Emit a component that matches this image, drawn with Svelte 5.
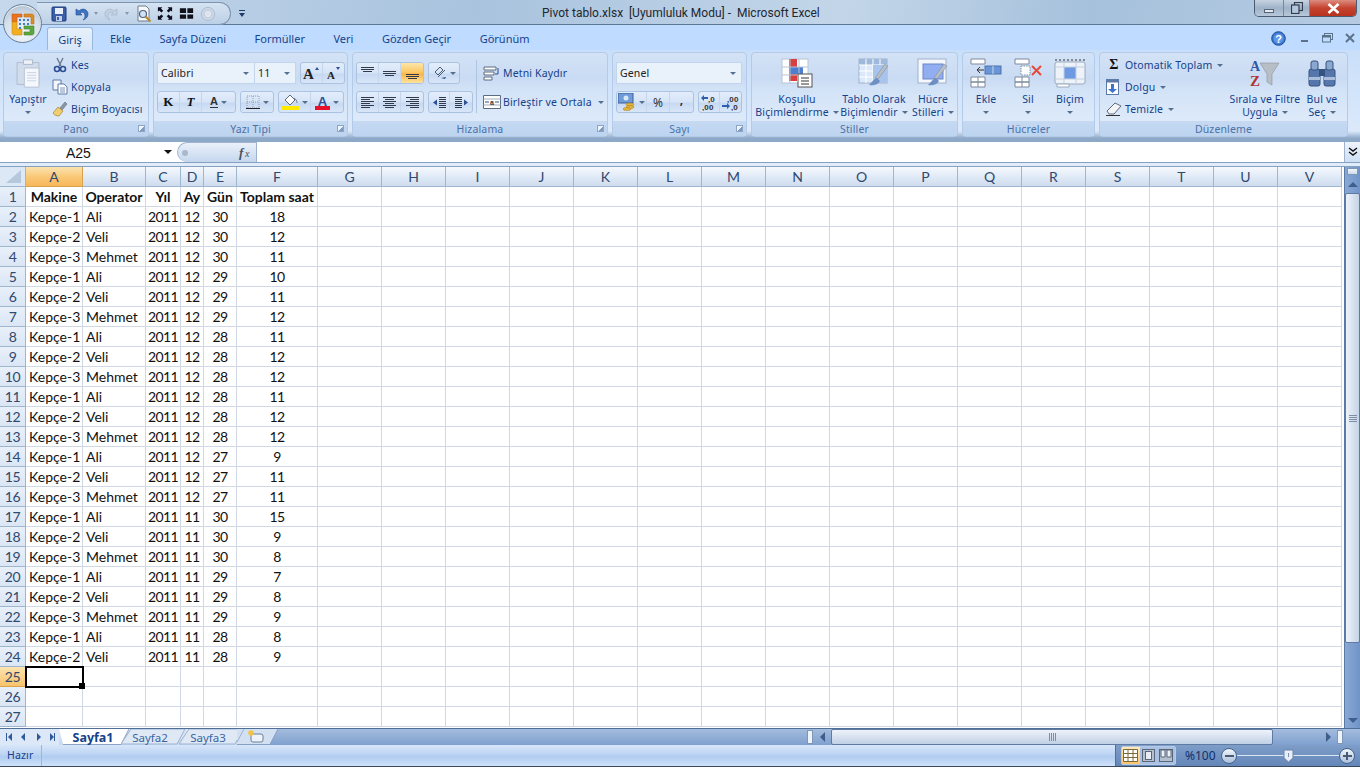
<script>
  const tabs = ['Giriş', 'Ekle', 'Sayfa Düzeni', 'Formüller', 'Veri', 'Gözden Geçir', 'Görünüm'];
  const colWidths = [57, 63, 35, 23, 33, 81, 64, 64, 64, 64, 64, 64, 64, 64, 64, 64, 64, 64, 64, 64, 64, 64];
  const colNames = 'ABCDEFGHIJKLMNOPQRSTUV'.split('');
  const template = '26px ' + colWidths.map((w) => w + 'px').join(' ');
  const head = ['Makine', 'Operator', 'Yıl', 'Ay', 'Gün', 'Toplam saat'];
  const rows = [
    ['Kepçe-1', 'Ali', 2011, 12, 30, 18],
    ['Kepçe-2', 'Veli', 2011, 12, 30, 12],
    ['Kepçe-3', 'Mehmet', 2011, 12, 30, 11],
    ['Kepçe-1', 'Ali', 2011, 12, 29, 10],
    ['Kepçe-2', 'Veli', 2011, 12, 29, 11],
    ['Kepçe-3', 'Mehmet', 2011, 12, 29, 12],
    ['Kepçe-1', 'Ali', 2011, 12, 28, 11],
    ['Kepçe-2', 'Veli', 2011, 12, 28, 12],
    ['Kepçe-3', 'Mehmet', 2011, 12, 28, 12],
    ['Kepçe-1', 'Ali', 2011, 12, 28, 11],
    ['Kepçe-2', 'Veli', 2011, 12, 28, 12],
    ['Kepçe-3', 'Mehmet', 2011, 12, 28, 12],
    ['Kepçe-1', 'Ali', 2011, 12, 27, 9],
    ['Kepçe-2', 'Veli', 2011, 12, 27, 11],
    ['Kepçe-3', 'Mehmet', 2011, 12, 27, 11],
    ['Kepçe-1', 'Ali', 2011, 11, 30, 15],
    ['Kepçe-2', 'Veli', 2011, 11, 30, 9],
    ['Kepçe-3', 'Mehmet', 2011, 11, 30, 8],
    ['Kepçe-1', 'Ali', 2011, 11, 29, 7],
    ['Kepçe-2', 'Veli', 2011, 11, 29, 8],
    ['Kepçe-3', 'Mehmet', 2011, 11, 29, 9],
    ['Kepçe-1', 'Ali', 2011, 11, 28, 8],
    ['Kepçe-2', 'Veli', 2011, 11, 28, 9]
  ];
  const blankCols = colWidths.length - 6;
</script>

<div class="app">
  <!-- title bar -->
  <div class="titlebar">
    <div class="qat">
      <svg width="16" height="16" viewBox="0 0 16 16" class="q1"><rect x="1" y="1" width="14" height="14" rx="1" fill="#3a5fa8" stroke="#1d3a78"/><rect x="4" y="2" width="8" height="6" fill="#e8eef8"/><rect x="5" y="10" width="6" height="5" fill="#c4cfe4"/><rect x="6" y="11" width="2" height="3" fill="#3a5fa8"/></svg>
      <svg width="16" height="16" viewBox="0 0 16 16" class="q2"><path d="M3 3v6h6L7 7c3-2 5 0 5 3 0 2-1 3-2 4 3-1 5-3 5-6 0-4-5-7-9-3z" fill="#3f74c4" stroke="#1f4a92" stroke-width=".6"/></svg>
      <span class="mini-caret q3"></span>
      <svg width="16" height="16" viewBox="0 0 16 16" class="q4"><path d="M13 3v6H7l2-2C6 5 4 7 4 10c0 2 1 3 2 4-3-1-5-3-5-6 0-4 5-7 9-3z" fill="#c2d0e2" stroke="#9fb2c8" stroke-width=".6"/></svg>
      <span class="mini-caret q5"></span>
      <svg width="18" height="18" viewBox="0 0 18 18" class="q6"><path d="M3 1h8l3 3v12H3z" fill="#f8f8f8" stroke="#6d7d92"/><circle cx="8" cy="9" r="3.5" fill="#cfe2f7" stroke="#4d6480" stroke-width="1.2"/><path d="M10.500 11.500l5 5" stroke="#b98b2c" stroke-width="2.200"/></svg>
      <svg width="16" height="15" viewBox="0 0 18 16" class="q7"><path d="M1 1h5L4.500 2.500 7 5 5 7 2.500 4.500 1 6zM17 1v5l-1.500-1.500L13 7l-2-2 2.500-2.500L12 1zM1 15v-5l1.500 1.500L5 9l2 2-2.500 2.500L6 15zM17 15h-5l1.500-1.500L11 11l2-2 2.500 2.500L17 10z" fill="#0c0c20"/></svg>
      <svg width="15" height="13" viewBox="0 0 17 14" class="q8"><path d="M1 1h7v5.500H1zM9.500 1H16v5.500H9.500zM1 8h7v5H1zM9.500 8H16v5H9.500z" fill="#101018"/></svg>
      <svg width="16" height="16" viewBox="0 0 18 18" class="q9"><circle cx="9" cy="9" r="7.500" fill="#ccd8e6" stroke="#aab9cb"/><circle cx="9" cy="9" r="4.500" fill="#dde5ef" stroke="#bcc8d6"/></svg>
    </div>
    <svg class="custom" width="8" height="9" viewBox="0 0 8 9"><path d="M1 1h6v1H1zM1 4h6L4 8z" fill="#1f3a68"/></svg>
    <div class="title">Pivot tablo.xlsx&nbsp; [Uyumluluk Modu] -&nbsp; Microsoft Excel</div>
    <div class="winbtns">
      <div class="wb min"><span></span></div>
      <div class="wb max"><svg width="12" height="12" viewBox="0 0 12 12"><rect x="3.500" y=".5" width="8" height="8" fill="none" stroke="#333c4c" stroke-width="1.200"/><rect x=".5" y="3" width="7.500" height="8.500" fill="#b4c6da" stroke="#333c4c" stroke-width="1.200"/></svg></div>
      <div class="wb close"><svg width="13" height="11" viewBox="0 0 13 11"><path d="M1.500 1l10 9M11.500 1l-10 9" stroke="#fff" stroke-width="2.600"/></svg></div>
    </div>
  </div>

  <!-- office orb overlays the title and tab rows -->
  <div class="orb">
    <svg width="26" height="26" viewBox="0 0 26 26">
      <path d="M2 3h10v3H7v5H2z" fill="#e8741e" stroke="#c9591a" stroke-width=".6"/>
      <path d="M2 11h5v7h5v6H4c-1 0-2-1-2-2z" fill="#f0b020" stroke="#cf8c16" stroke-width=".6"/>
      <path d="M14 15h10v7c0 1-1 2-2 2h-8v-3h6v-3h-6z" fill="#5da63f" stroke="#3f8a2a" stroke-width=".6"/>
      <path d="M14 3h8c1 0 2 1 2 2v8h-3V6h-7z" fill="#d98a2a" stroke="#c27420" stroke-width=".6"/>
      <path d="M9 8h2v2H9zM13 8h2v2h-2zM17 8h2v2h-2zM9 12h2v2H9zM13 12h2v2h-2zM17 12h2v2h-2zM9 16h2v2H9z" fill="#3f7fc4"/>
    </svg>
  </div>

  <!-- tab row -->
  <div class="tabrow">
    {#each tabs as t, i}
      <div class="tab" class:active={i === 0}>{t}</div>
    {/each}
    <div class="tabrow-right">
      <svg width="15" height="15" viewBox="0 0 15 15"><circle cx="7.500" cy="7.500" r="6.800" fill="#3b74cc" stroke="#1e4fa2"/><circle cx="7.500" cy="7.500" r="5" fill="#5a95e6"/><text x="7.500" y="11.500" text-anchor="middle" font-size="11" font-weight="700" font-family="Liberation Sans" fill="#fff">?</text></svg>
      <svg class="rc1" width="10" height="10" viewBox="0 0 10 10"><rect x="1" y="7" width="7" height="2" fill="#5b7288"/></svg>
      <svg class="rc2" width="11" height="10" viewBox="0 0 11 10"><rect x="2.500" y=".5" width="8" height="6" fill="none" stroke="#5b7288"/><rect x=".5" y="2.500" width="8" height="6.500" fill="#bfdbff" stroke="#5b7288"/><rect x=".5" y="2.500" width="8" height="2" fill="#5b7288"/></svg>
      <svg class="rc3" width="10" height="10" viewBox="0 0 10 10"><path d="M1 1l8 8M9 1l-8 8" stroke="#5b7288" stroke-width="2"/></svg>
    </div>
  </div>

  <!-- ribbon -->
  <div class="ribbon">
    <section class="group" style="width:146px">
      <div class="body pano">
        <div class="lg paste">
          <svg width="28" height="31" viewBox="0 0 28 34"><path d="M2 5h24v24H2z" fill="#d3dcea" stroke="#aebccf"/><path d="M9 2h10v5H9z" fill="#eef2f8" stroke="#a8b6c9"/><path d="M10 11h16v21H10z" fill="#f4f7fb" stroke="#b5c1d2"/><path d="M13 16h10M13 19h10M13 22h10M13 25h10" stroke="#c8d2df"/></svg>
          <span>Yapıştır</span>
          <i class="caret"></i>
        </div>
        <div class="stack">
          <div class="row"><svg width="16" height="16" viewBox="0 0 16 16"><path d="M5 1l4 8M11 1L7 9" stroke="#6d7a8c" stroke-width="1.400"/><circle cx="5" cy="12" r="2.500" fill="none" stroke="#2d4f94" stroke-width="1.600"/><circle cx="11" cy="12" r="2.500" fill="none" stroke="#2d4f94" stroke-width="1.600"/></svg>Kes</div>
          <div class="row"><svg width="16" height="16" viewBox="0 0 16 16"><path d="M1 1h8v10H1z" fill="#f3f6fb" stroke="#5c7aa6"/><path d="M6 5h6l3 3v7H6z" fill="#fff" stroke="#5c7aa6"/><path d="M8 9h5M8 11h5M8 13h5" stroke="#7a93b8"/></svg>Kopyala</div>
          <div class="row"><svg width="16" height="16" viewBox="0 0 16 16"><path d="M8 7l5-6 2 2-5 6z" fill="#8a97a8" stroke="#5c6879" stroke-width=".6"/><path d="M1 12l5-6 5 4-4 5c-2 0-5-1-6-3z" fill="#f0cf72" stroke="#a8812c" stroke-width=".7"/></svg>Biçim Boyacısı</div>
        </div>
      </div>
      <div class="label">Pano<i class="launch"></i></div>
    </section>

    <section class="group" style="width:195px">
      <div class="body lines">
        <div class="line">
          <div class="select" style="width:98px">Calibri<i class="caret"></i></div>
          <div class="select" style="width:42px;margin-left:-1px">11<i class="caret"></i></div>
          <div class="btnset" style="margin-left:4px">
            <div class="btn" style="width:22px"><svg width="18" height="15" viewBox="0 0 18 15"><text x="0" y="13" font-family="Liberation Serif" font-weight="700" font-size="15" fill="#222">A</text><path d="M12 4l2-3 2 3z" fill="#2d4f94"/></svg></div>
            <div class="btn" style="width:21px"><svg width="16" height="15" viewBox="0 0 16 15"><text x="1" y="13" font-family="Liberation Serif" font-weight="700" font-size="11" fill="#222">A</text><path d="M10 1l2 3 2-3z" fill="#2d4f94"/></svg></div>
          </div>
        </div>
        <div class="line">
          <div class="btnset">
            <div class="btn" style="width:22px"><b class="k">K</b></div>
            <div class="btn" style="width:22px"><b class="t">T</b></div>
            <div class="btn" style="width:33px"><span class="u">A</span><i class="caret"></i></div>
          </div>
          <div class="btnset" style="margin-left:4px">
            <div class="btn" style="width:32px"><svg width="14" height="14" viewBox="0 0 14 14"><path d="M1 1h12v12H1zM7 1v12M1 7h12" fill="none" stroke="#8f9cae" stroke-dasharray="1 1"/><path d="M0 13.500h14" stroke="#222"/></svg><i class="caret"></i></div>
          </div>
          <div class="btnset" style="margin-left:4px">
            <div class="btn" style="width:32px"><svg width="17" height="16" viewBox="0 0 17 16"><path d="M3 6l5-5 5 5-5 5z" fill="#fff" stroke="#5b6a80"/><path d="M12 4c2 1 3 3 3 5" stroke="#6a7a90" fill="none"/><rect x="0" y="12" width="17" height="4" fill="#ffea00"/></svg><i class="caret"></i></div>
            <div class="btn" style="width:32px"><svg width="15" height="16" viewBox="0 0 15 16"><text x="7.500" y="11.500" text-anchor="middle" font-family="Liberation Sans" font-weight="700" font-size="13" fill="#2d4f94">A</text><rect x="0" y="12" width="15" height="4" fill="#e8102a"/></svg><i class="caret"></i></div>
          </div>
        </div>
      </div>
      <div class="label">Yazı Tipi<i class="launch"></i></div>
    </section>

    <section class="group" style="width:256px">
      <div class="body align">
        <div class="lines">
          <div class="line">
            <div class="btnset">
              <div class="btn" style="width:22px"><svg width="15" height="14" viewBox="0 0 15 14"><path d="M1 1.500h13M1 3.500h13M3 5.500h9" stroke="#303a4a"/></svg></div>
              <div class="btn" style="width:22px"><svg width="15" height="14" viewBox="0 0 15 14"><path d="M1 5.500h13M1 7.500h13M3 9.500h9" stroke="#303a4a"/></svg></div>
              <div class="btn on" style="width:22px"><svg width="15" height="14" viewBox="0 0 15 14"><path d="M1 8.500h13M1 10.500h13M3 12.500h9" stroke="#303a4a"/></svg></div>
            </div>
            <div class="btnset" style="margin-left:4px">
              <div class="btn" style="width:30px"><svg width="14" height="14" viewBox="0 0 14 14"><path d="M2 6l5-5 3 3-5 5zM5 11l7-7" fill="none" stroke="#4b5b72"/><path d="M8 12l5-1-1 2z" fill="#2d4f94"/></svg><i class="caret"></i></div>
            </div>
          </div>
          <div class="line">
            <div class="btnset">
              <div class="btn" style="width:22px"><svg width="15" height="13" viewBox="0 0 15 13"><path d="M1 1.500h13M1 3.500h9M1 5.500h13M1 7.500h9M1 9.500h13M1 11.500h9" stroke="#303a4a"/></svg></div>
              <div class="btn" style="width:22px"><svg width="15" height="13" viewBox="0 0 15 13"><path d="M1 1.500h13M3 3.500h9M1 5.500h13M3 7.500h9M1 9.500h13M3 11.500h9" stroke="#303a4a"/></svg></div>
              <div class="btn" style="width:22px"><svg width="15" height="13" viewBox="0 0 15 13"><path d="M1 1.500h13M5 3.500h9M1 5.500h13M5 7.500h9M1 9.500h13M5 11.500h9" stroke="#303a4a"/></svg></div>
            </div>
            <div class="btnset" style="margin-left:4px">
              <div class="btn" style="width:21px"><svg width="15" height="13" viewBox="0 0 15 13"><path d="M7 1.500h7M7 3.500h7M7 5.500h7M7 7.500h7M7 9.500h7M7 11.500h7" stroke="#303a4a"/><path d="M1 6.500l4-3v6z" fill="#2d4f94"/></svg></div>
              <div class="btn" style="width:22px"><svg width="15" height="13" viewBox="0 0 15 13"><path d="M1 1.500h7M1 3.500h7M1 5.500h7M1 7.500h7M1 9.500h7M1 11.500h7" stroke="#303a4a"/><path d="M14 6.500l-4-3v6z" fill="#2d4f94"/></svg></div>
            </div>
          </div>
        </div>
        <div class="vsep"></div>
        <div class="lines wraps">
          <div class="line text"><svg width="18" height="16" viewBox="0 0 18 16"><path d="M1 2h12v3H1zM1 7h10v3H1zM1 12h8v3H1z" fill="#fff" stroke="#5d6b7e"/><path d="M15 3v6h-3" fill="none" stroke="#2d4f94"/></svg>Metni Kaydır</div>
          <div class="line text"><svg width="18" height="16" viewBox="0 0 18 16"><path d="M.5 1.500h17v13H.5z" fill="#fff" stroke="#5d6b7e"/><path d="M.5 5h17M.5 11h17" stroke="#a0acbc"/><path d="M2 8h4M12 8h4" stroke="#2d4f94"/><text x="9" y="10.500" text-anchor="middle" font-size="7" font-family="Liberation Sans" font-weight="700" fill="#333">a</text></svg>Birleştir ve Ortala<i class="caret"></i></div>
        </div>
      </div>
      <div class="label">Hizalama<i class="launch"></i></div>
    </section>

    <section class="group" style="width:135px">
      <div class="body lines">
        <div class="line">
          <div class="select" style="width:126px">Genel<i class="caret"></i></div>
        </div>
        <div class="line">
          <div class="btnset">
            <div class="btn" style="width:30px"><svg width="18" height="18" viewBox="0 0 18 18"><rect x="0" y="0" width="15" height="10" fill="#6f9bd8" stroke="#3a5f9c"/><circle cx="8" cy="5" r="2.500" fill="#d8e6f8"/><ellipse cx="12" cy="11.500" rx="4" ry="1.500" fill="#e6b63c" stroke="#a47c1e" stroke-width=".5"/><ellipse cx="12" cy="14" rx="4" ry="1.500" fill="#e6b63c" stroke="#a47c1e" stroke-width=".5"/><ellipse cx="9" cy="16" rx="4" ry="1.500" fill="#e6b63c" stroke="#a47c1e" stroke-width=".5"/></svg><i class="caret"></i></div>
            <div class="btn pct" style="width:23px">%</div>
            <div class="btn pct comma" style="width:23px">,</div>
          </div>
          <div class="btnset" style="margin-left:4px">
            <div class="btn nf" style="width:21px"><svg width="19" height="17" viewBox="0 0 19 17"><text x="8" y="7.500" font-size="8" font-weight="700" font-family="Liberation Sans" fill="#333">,0</text><text x="2" y="15.500" font-size="8" font-weight="700" font-family="Liberation Sans" fill="#333">,00</text><path d="M1 4l3-3v2h4v2H4v2z" fill="#2d5fae"/></svg></div>
            <div class="btn nf" style="width:21px"><svg width="19" height="17" viewBox="0 0 19 17"><text x="6" y="7.500" font-size="8" font-weight="700" font-family="Liberation Sans" fill="#333">,00</text><text x="10" y="15.500" font-size="8" font-weight="700" font-family="Liberation Sans" fill="#333">,0</text><path d="M9 12l-3-3v2H1v2h5v2z" fill="#2d5fae"/></svg></div>
          </div>
        </div>
      </div>
      <div class="label">Sayı<i class="launch"></i></div>
    </section>

    <section class="group" style="width:207px">
      <div class="body big">
        <div class="lg" style="width:82px">
          <svg width="32" height="30" viewBox="0 0 32 30"><rect x="1" y="1" width="26" height="24" fill="#fff" stroke="#b8c4d4"/><rect x="8" y="1" width="8" height="8" fill="#d84040"/><rect x="8" y="9" width="14" height="7" fill="#4d7fd0"/><rect x="8" y="16" width="8" height="7" fill="#d84040"/><path d="M1 9h26M1 17h26M9 1v24M18 1v24" stroke="#b8c4d4"/><rect x="17" y="16" width="14" height="13" fill="#fff" stroke="#555"/><path d="M20 20h8M20 23h8M20 26h8" stroke="#333"/></svg>
          <span>Koşullu</span>
          <span>Biçimlendirme<i class="caret"></i></span>
        </div>
        <div class="lg" style="width:72px">
          <svg width="32" height="30" viewBox="0 0 32 30"><rect x="1" y="1" width="28" height="24" fill="#dce9fa" stroke="#9fb2ca"/><rect x="1" y="1" width="28" height="6" fill="#9eb9dc"/><path d="M1 7h28M1 13h28M1 19h28M8 1v24M15 1v24M22 1v24" stroke="#fff"/><rect x="15" y="7" width="14" height="18" fill="#a8c4ec"/><path d="M30 8l-10 13-3-1 10-14z" fill="#b8bec8" stroke="#7a8494" stroke-width=".5"/><path d="M19 20c-2 0-4 3-8 7 4 1 9 0 11-4z" fill="#6d8fc4"/></svg>
          <span>Tablo Olarak</span>
          <span>Biçimlendir<i class="caret"></i></span>
        </div>
        <div class="lg" style="width:46px">
          <svg width="32" height="30" viewBox="0 0 32 30"><rect x="1" y="1" width="28" height="24" fill="#f4f7fb" stroke="#9fb2ca"/><rect x="6" y="6" width="20" height="15" fill="#90aef0" stroke="#6a88c8"/><path d="M30 8l-10 13-3-1 10-14z" fill="#b8bec8" stroke="#7a8494" stroke-width=".5"/><path d="M19 20c-2 0-4 3-8 7 4 1 9 0 11-4z" fill="#6d8fc4"/></svg>
          <span>Hücre</span>
          <span>Stilleri<i class="caret"></i></span>
        </div>
      </div>
      <div class="label">Stiller</div>
    </section>

    <section class="group" style="width:133px">
      <div class="body big cells">
        <div class="lg" style="width:42px">
          <svg width="32" height="30" viewBox="0 0 32 30"><path d="M1 1h14v5H1zM1 19h14v5H1zM1 24h14v5H1zM8 19v10" fill="#fff" stroke="#7d8a9c"/><rect x="15" y="8" width="16" height="8" fill="#6a95d6" stroke="#4d73ad"/><path d="M23 8v8" stroke="#c8d8f0"/><path d="M14 12H7m3-3l-3 3 3 3" fill="none" stroke="#333"/></svg>
          <span>Ekle</span>
          <i class="caret solo"></i>
        </div>
        <div class="lg" style="width:42px">
          <svg width="32" height="30" viewBox="0 0 32 30"><path d="M3 1h14v5H3zM3 19h14v5H3zM3 24h14v5H3zM10 19v10" fill="#fff" stroke="#7d8a9c"/><path d="M9 8h9v9H9z" fill="#fff" stroke="#7d8a9c" stroke-dasharray="1.500 1"/><path d="M20 8l9 9M29 8l-9 9" stroke="#e64a3a" stroke-width="2"/></svg>
          <span>Sil</span>
          <i class="caret solo"></i>
        </div>
        <div class="lg" style="width:42px">
          <svg width="32" height="30" viewBox="0 0 32 30"><path d="M1 2h30" stroke="#333" stroke-dasharray="2 2"/><rect x="1" y="4" width="30" height="22" rx="2" fill="#eef3fa" stroke="#9aaabd"/><rect x="10" y="9" width="12" height="12" fill="#6e9ae4"/><path d="M1 9h30M1 21h30M10 4v22M22 4v22" stroke="#c5d0de"/><path d="M3 26h12v3H3z" fill="#fff" stroke="#9aaabd"/></svg>
          <span>Biçim</span>
          <i class="caret solo"></i>
        </div>
      </div>
      <div class="label">Hücreler</div>
    </section>

    <section class="group" style="width:249px">
      <div class="body edit">
        <div class="stack sums">
          <div class="row"><b class="sigma">Σ</b>Otomatik Toplam<i class="caret"></i></div>
          <div class="row"><svg width="16" height="16" viewBox="0 0 16 16"><rect x=".5" y=".5" width="12" height="15" fill="#fff" stroke="#5d7ba8"/><rect x=".5" y=".5" width="12" height="3" fill="#5d7ba8"/><path d="M5 5h3v5h3l-4.500 4L2 10h3z" fill="#3a74cc"/></svg>Dolgu<i class="caret"></i></div>
          <div class="row"><svg width="16" height="14" viewBox="0 0 16 14"><path d="M1 9l8-8 6 3-7 8H3z" fill="#f2f4f8" stroke="#5e6a7c"/><path d="M0 13.500h14" stroke="#333"/></svg>Temizle<i class="caret"></i></div>
        </div>
        <div class="lg" style="width:74px">
          <svg width="32" height="30" viewBox="0 0 32 30"><text x="1" y="13" font-family="Liberation Serif" font-weight="700" font-size="14" fill="#3158a8">A</text><text x="1" y="28" font-family="Liberation Serif" font-weight="700" font-size="15" fill="#b23434">Z</text><path d="M11 5h19l-7 11v11l-5-3v-8z" fill="#b8bec6" stroke="#8a929c" stroke-width=".6"/></svg>
          <span>Sırala ve Filtre</span>
          <span>Uygula<i class="caret"></i></span>
        </div>
        <div class="lg" style="width:40px">
          <svg width="30" height="28" viewBox="0 0 30 28"><rect x="2" y="10" width="11" height="17" rx="2" fill="#5677ac" stroke="#36527e"/><rect x="17" y="10" width="11" height="17" rx="2" fill="#5677ac" stroke="#36527e"/><rect x="4" y="2" width="7" height="9" rx="2" fill="#8aa7d0" stroke="#36527e"/><rect x="19" y="2" width="7" height="9" rx="2" fill="#8aa7d0" stroke="#36527e"/><rect x="12" y="10" width="6" height="7" fill="#36527e"/><rect x="2" y="18" width="11" height="3" fill="#aabddb"/><rect x="17" y="18" width="11" height="3" fill="#aabddb"/></svg>
          <span>Bul ve</span>
          <span>Seç<i class="caret"></i></span>
        </div>
      </div>
      <div class="label">Düzenleme</div>
    </section>
  </div>

  <!-- name box and formula bar -->
  <div class="formula">
    <div class="namebox"><span>A25</span><i class="blackcaret"></i></div>
    <div class="fxpill"><i class="dot"></i><svg width="18" height="14" viewBox="0 0 18 14"><text x="2" y="11" font-family="Liberation Serif" font-style="italic" font-weight="700" font-size="13" fill="#4a5260">f</text><text x="8" y="11" font-family="Liberation Serif" font-style="italic" font-size="10" fill="#4a5260">x</text></svg></div>
    <div class="fxinput"></div>
    <div class="fxexpand"><svg width="10" height="10" viewBox="0 0 10 10"><path d="M1 1l4 3 4-3M1 5l4 3 4-3" fill="none" stroke="#111" stroke-width="1.400"/></svg></div>
  </div>
  <div class="gap"></div>

  <!-- sheet -->
  <div class="sheet">
    <div class="grid">
      <div class="gr header" style:grid-template-columns={template}>
        <div class="corner"><svg width="18" height="15" viewBox="0 0 18 15"><path d="M17 1v13H2z" fill="#b6c8dc"/></svg></div>
        {#each colNames as c, i}
          <div class="ch" class:sel={i === 0}>{c}</div>
        {/each}
      </div>
      <div class="gr" style:grid-template-columns={template}>
        <div class="rh">1</div>
        {#each head as h}
          <div class="c hd">{h}</div>
        {/each}
        {#each { length: blankCols } as _}
          <div class="c"></div>
        {/each}
      </div>
      {#each rows as r, ri}
        <div class="gr" style:grid-template-columns={template}>
          <div class="rh">{ri + 2}</div>
          <div class="c">{r[0]}</div>
          <div class="c">{r[1]}</div>
          <div class="c num">{r[2]}</div>
          <div class="c num">{r[3]}</div>
          <div class="c num">{r[4]}</div>
          <div class="c num">{r[5]}</div>
          {#each { length: blankCols } as _}
            <div class="c"></div>
          {/each}
        </div>
      {/each}
      {#each [25, 26, 27] as n}
        <div class="gr" style:grid-template-columns={template}>
          <div class="rh" class:sel={n === 25}>{n}</div>
          {#each colNames as _, i}
            <div class="c" class:active={n === 25 && i === 0}></div>
          {/each}
        </div>
      {/each}
    </div>
    <div class="vscroll">
      <div class="vsplit"></div>
      <div class="varrow"><i class="up"></i></div>
      <div class="vthumb"><span></span></div>
      <div class="vtrack"></div>
      <div class="varrow"><i class="down"></i></div>
    </div>
  </div>

  <!-- sheet tabs and horizontal scroll -->
  <div class="sheetbar">
    <div class="navs">
      <svg width="52" height="10" viewBox="0 0 52 10"><path d="M3 1v8h1V1zM9 1L5 5l4 4zM22 1l-4 4 4 4zM34 1l4 4-4 4zM47 1l4 4-4 4zM51 1v8h1V1z" fill="#2f5a9a"/></svg>
    </div>
    <div class="stabs">
      <div class="stab first"><svg width="70" height="16" viewBox="0 0 70 16"><path d="M0 0h70l-8 15H4z" fill="#fff"/><path d="M70 0l-8 15.500H4" fill="none" stroke="#8aa3c6"/></svg><span>Sayfa1</span></div>
      <div class="stab"><svg width="66" height="16" viewBox="0 0 66 16"><path d="M10 0h54l-8 15H0z" fill="#dfe8f5" stroke="#9db3d1"/></svg><span>Sayfa2</span></div>
      <div class="stab"><svg width="66" height="16" viewBox="0 0 66 16"><path d="M10 0h54l-8 15H0z" fill="#dfe8f5" stroke="#9db3d1"/></svg><span>Sayfa3</span></div>
      <div class="stab newt"><svg width="41" height="16" viewBox="0 0 41 16"><path d="M0 0h41l-8 15H0z" fill="#d3e0f2"/><path d="M41 0l-8 15.500H0" fill="none" stroke="#86a0c4"/><path d="M7 0l-8 15" fill="none" stroke="#9db3d1"/><rect x="14" y="5" width="12" height="8" rx="2" fill="#eef3f9" stroke="#6a7f9c"/><circle cx="14" cy="4" r="2.800" fill="#f2c445"/></svg></div>
    </div>
    <div class="htrack-l"></div>
    <div class="hsplit"></div>
    <div class="harrow"><i class="left"></i></div>
    <div class="hthumb"><span></span></div>
    <div class="htrack"></div>
    <div class="harrow"><i class="right"></i></div>
    <div class="hsplit2"></div>
  </div>

  <!-- status -->
  <div class="status">
    <div class="ready">Hazır</div>
    <div class="sfill"></div>
    <div class="sright">
      <div class="views">
        <div class="vb on"><svg width="15" height="13" viewBox="0 0 15 13"><path d="M.5.5h14v12H.5zM.5 4.500h14M.5 8.500h14M5 .5v12M10 .5v12" fill="#fff" stroke="#7a6a3a"/></svg></div>
        <div class="vb"><svg width="13" height="13" viewBox="0 0 13 13"><rect x=".5" y=".5" width="12" height="12" fill="#b4bfcf" stroke="#5a6678"/><rect x="3.500" y="2.500" width="6" height="8" fill="#e8edf4" stroke="#5a6678"/></svg></div>
        <div class="vb"><svg width="14" height="13" viewBox="0 0 14 13"><rect x=".5" y=".5" width="13" height="12" fill="#b4bfcf" stroke="#5a6678"/><path d="M2 1h4v7H2zM8 1h4v7H8z" fill="#eef2f8" stroke="#5a6678"/></svg></div>
      </div>
      <div class="zoomv">%100</div>
      <div class="zbtn"><span></span></div>
      <div class="zslider"><svg width="11" height="14" viewBox="0 0 11 14"><path d="M1 1h9v8l-4.500 4L1 9z" fill="#e8eef7" stroke="#6a84a8"/><path d="M5.500 4v4" stroke="#7a90ae"/></svg></div>
      <div class="zbtn plus"><span></span></div>
    </div>
  </div>
  <div class="foot"></div>
</div>

<style>
  :global(body) {
    margin: 0;
    background: #fff;
  }

  .app {
    position: relative;
    width: 1360px;
    height: 768px;
    overflow: hidden;
    display: flex;
    flex-direction: column;
    font-family: 'Noto Sans', sans-serif;
    font-size: 10.5px;
    letter-spacing: .15px;
    color: #15428b;
  }

  /* title bar */
  .titlebar {
    position: relative;
    height: 25px;
    box-sizing: border-box;
    display: flex;
    background: linear-gradient(100deg, #c5d8ec 0%, #a9c3de 35%, #c3d6e9 62%, #a6c1dc 80%, #b5cbe2 100%);
    border-bottom: 1px solid #5e7894;
  }

  .qat {
    position: relative;
    margin: 2px 0 0 37px;
    width: 193px;
    height: 21px;
    display: flex;
    align-items: center;
    border: 1px solid #7d95b0;
    border-left: none;
    border-radius: 0 12px 12px 0;
    background: linear-gradient(#d5e3f2, #bcd0e6);
  }

  .qat svg,
  .qat .mini-caret {
    flex: none;
  }

  .q1 { margin-left: 14px; }
  .q2 { margin-left: 6px; }
  .q3 { margin-left: 5px; }
  .q4 { margin-left: 6px; }
  .q5 { margin-left: 5px; }
  .q6 { margin-left: 6px; }
  .q7 { margin-left: 4px; }
  .q8 { margin-left: 6px; }
  .q9 { margin-left: 6px; }

  .mini-caret {
    width: 0;
    height: 0;
    border: 2.500px solid transparent;
    border-top: 3px solid #8496ab;
    border-bottom: none;
  }

  .custom {
    margin: 9px 0 0 7px;
  }

  .title {
    position: absolute;
    left: 542px;
    top: 5px;
    font-family: 'Roboto', sans-serif;
    font-size: 12px;
    letter-spacing: 0;
    line-height: 16px;
    color: #22272e;
    white-space: nowrap;
  }

  .winbtns {
    margin-left: auto;
    margin-right: 3px;
    width: 103px;
    height: 17px;
    display: flex;
    box-sizing: border-box;
    border: 1px solid #4b5c70;
    border-top: none;
    border-radius: 0 0 5px 5px;
    overflow: hidden;
  }

  .wb {
    display: flex;
    align-items: center;
    justify-content: center;
    background: linear-gradient(#c6d3e2, #9fb2c8 50%, #b7c8da);
    border-right: 1px solid #77889c;
  }

  .min { width: 28px; }
  .max { width: 25px; }
  .close {
    flex: 1;
    border: none;
    background: linear-gradient(#dc8d80, #c4432f 50%, #b8321e);
  }

  .min span {
    width: 10px;
    height: 4px;
    margin-top: 5px;
    box-sizing: border-box;
    background: #e4e9f0;
    border: 1px solid #56667a;
  }

  .orb {
    position: absolute;
    left: 3px;
    top: 4px;
    width: 37px;
    height: 37px;
    display: flex;
    align-items: center;
    justify-content: center;
    border-radius: 50%;
    background: radial-gradient(circle at 50% 80%, #f0f5fb, #d5e0ec 55%, #a3b3c6 100%);
    border: 1px solid #6a7d92;
    box-shadow: inset 0 1px 0 #f4f8fc;
  }

  /* tabs */
  .tabrow {
    height: 25px;
    box-sizing: border-box;
    padding: 2px 0 0 47px;
    display: flex;
    background: #bfdbff;
    font-size: 11px;
    letter-spacing: 0;
  }

  .tab {
    padding: 4px 0 0;
    margin-right: 28.500px;
    line-height: 16px;
  }

  .tab.active {
    box-sizing: border-box;
    width: 46px;
    text-align: center;
    margin-right: 17px;
    background: linear-gradient(#e6f0fc, #d8e6f8);
    border: 1px solid #9ab8dc;
    border-bottom: none;
    border-radius: 3px 3px 0 0;
  }

  .tabrow-right {
    margin-left: auto;
    padding: 2px 5px 0 0;
    height: 18px;
    display: flex;
    align-items: center;
  }

  .rc1 { margin-left: 14px; }
  .rc2 { margin-left: 12px; }
  .rc3 { margin-left: 12px; }

  /* ribbon */
  .ribbon {
    height: 92px;
    box-sizing: border-box;
    padding: 2px 0 3px 3px;
    display: flex;
    gap: 4px;
    background: linear-gradient(#c9dff9, #d5e6fb 60%, #dce9fb 88%, #8ea9c8 96%, #8ea9c8);
  }

  .group {
    box-sizing: border-box;
    height: 85px;
    flex: none;
    display: flex;
    flex-direction: column;
    border: 1px solid #b3cbe8;
    border-radius: 4px;
    background: linear-gradient(#d3e2f6, #c9dbf3 30%, #d3e3f7 45%, #e2edfb);
    overflow: hidden;
  }

  .body {
    height: 68px;
    flex: none;
    box-sizing: border-box;
    display: flex;
  }

  .label {
    position: relative;
    flex: 1;
    text-align: center;
    line-height: 17px;
    color: #4a72a8;
    background: linear-gradient(#c5d9f2, #bcd3ef);
  }

  .launch {
    position: absolute;
    right: 3px;
    top: 4px;
    width: 5px;
    height: 5px;
    border: 1px solid #8ea6c6;
    background: linear-gradient(135deg, #eef4fb 55%, #7f9abd 55%);
  }

  .caret {
    display: inline-block;
    width: 0;
    height: 0;
    margin-left: 4px;
    vertical-align: 2px;
    border: 3px solid transparent;
    border-top: 3px solid #55708f;
    border-bottom: none;
  }

  .lg {
    flex: none;
    display: flex;
    flex-direction: column;
    align-items: center;
    padding-top: 5px;
    box-sizing: border-box;
    line-height: 13px;
    white-space: nowrap;
  }

  .lg svg {
    flex: none;
    height: 30px;
    margin-bottom: 5px;
  }

  .paste {
    width: 48px;
  }

  .paste svg {
    height: 31px;
    margin: 0 0 4px;
  }

  .paste .caret {
    margin: 5px 0 0;
  }

  .stack {
    display: flex;
    flex-direction: column;
    padding-top: 1px;
  }

  .row {
    height: 22px;
    display: flex;
    align-items: center;
    gap: 1px;
    white-space: nowrap;
  }

  .row svg {
    flex: none;
  }

  .row .caret {
    vertical-align: 0;
    align-self: center;
  }

  .pano .row {
    gap: 3px;
  }

  .lines {
    display: flex;
    flex-direction: column;
    gap: 7px;
    padding: 9px 0 0 3px;
  }

  .line {
    height: 22px;
    display: flex;
    align-items: stretch;
  }

  .select {
    box-sizing: border-box;
    height: 22px;
    display: flex;
    align-items: center;
    padding-left: 3px;
    font-size: 10.500px;
    color: #222;
    background: #e9f1fb;
    border: 1px solid #c2d5ec;
  }

  .select .caret {
    margin-left: auto;
    margin-right: 5px;
    vertical-align: 0;
  }

  .btnset {
    display: flex;
    height: 22px;
    box-sizing: border-box;
    border: 1px solid #abc3e0;
    border-radius: 3px;
    background: linear-gradient(#e3edfb, #d6e4f7 50%, #c6d9f2 55%, #d9e6f8);
    overflow: hidden;
  }

  .btn {
    box-sizing: border-box;
    display: flex;
    align-items: center;
    justify-content: center;
    border-right: 1px solid #c5d6ec;
  }

  .btn:last-child {
    border-right: none;
  }

  .btn .caret {
    margin-left: 3px;
    vertical-align: 0;
  }

  .btn.on {
    background: linear-gradient(#fde6a8, #fbc867 45%, #f9b44a 55%, #fde39b);
  }

  .k, .t {
    font-family: 'Liberation Serif', serif;
    font-size: 13px;
    font-weight: 700;
    color: #111;
  }

  .t {
    font-style: italic;
  }

  .u {
    font-family: 'Liberation Sans', sans-serif;
    font-size: 11px;
    font-weight: 700;
    color: #333;
    border-bottom: 1px solid #333;
    line-height: 11px;
  }

  .pct {
    font-size: 12px;
    color: #333;
  }

  .comma {
    font-weight: 700;
    padding-bottom: 5px;
  }

  .align {
    display: flex;
  }

  .vsep {
    width: 1px;
    height: 53px;
    margin: 7px 6px 0 3px;
    background: #aec5e0;
  }

  .wraps {
    padding-left: 0;
  }

  .line.text {
    align-items: center;
    gap: 2px;
    white-space: nowrap;
  }

  .line.text svg {
    flex: none;
  }

  .big {
    padding-left: 4px;
  }

  .cells {
    padding-left: 2px;
  }

  .solo {
    margin: 5px 0 0;
  }

  .edit {
    padding-left: 6px;
  }

  .sums {
    width: 122px;
  }

  .sums .row {
    gap: 3px;
  }

  .sums .row .caret {
    margin-left: 2px;
  }

  .sigma {
    width: 16px;
    text-align: center;
    font-family: 'Liberation Serif', serif;
    font-size: 14px;
    color: #111;
  }

  /* formula bar */
  .formula {
    height: 21px;
    box-sizing: border-box;
    display: flex;
    background: #fff;
    border-bottom: 1px solid #87a0bd;
  }

  .namebox {
    position: relative;
    width: 177px;
    display: flex;
    align-items: center;
    font-family: 'Liberation Sans', sans-serif;
    font-size: 14px;
    letter-spacing: 0;
    color: #111;
  }

  .namebox span {
    margin-left: 66px;
    padding-top: 1px;
  }

  .blackcaret {
    margin-left: auto;
    margin-right: 5px;
    border: 4px solid transparent;
    border-top: 4px solid #111;
    border-bottom: none;
  }

  .fxpill {
    width: 80px;
    display: flex;
    align-items: center;
    justify-content: flex-end;
    padding-right: 1px;
    box-sizing: border-box;
    border-radius: 10px 0 0 10px;
    border: 1px solid #9db3cf;
    border-bottom: none;
    background: linear-gradient(#eaf1fa, #c5d7ee);
  }

  .dot {
    width: 6px;
    height: 6px;
    margin-right: auto;
    margin-left: 4px;
    border-radius: 50%;
    background: #a9b8ca;
  }

  .fxinput {
    flex: 1;
    background: #fff;
  }

  .fxexpand {
    width: 15px;
    display: flex;
    align-items: center;
    justify-content: center;
    background: linear-gradient(#eef4fb, #cddff4);
    border-left: 1px solid #9db3cf;
  }

  .gap {
    height: 3px;
    background: #e1ecfa;
    border-bottom: 1px solid #87a0bd;
  }

  /* sheet */
  .sheet {
    height: 562px;
    display: flex;
    overflow: hidden;
    background: #fff;
  }

  .grid {
    width: 1344px;
    flex: none;
    overflow: hidden;
  }

  .gr {
    display: grid;
    height: 20px;
  }

  .ch,
  .rh,
  .c {
    font-family: 'Lato', sans-serif;
    font-size: 14px;
    letter-spacing: 0;
  }

  .ch {
    display: flex;
    align-items: center;
    justify-content: center;
    box-sizing: border-box;
    color: #30496e;
    background: linear-gradient(#f6f9fd, #dde8f6 60%, #cfdcee);
    border-right: 1px solid #9eb6ce;
    border-bottom: 1px solid #9eb6ce;
  }

  .ch.sel {
    background: linear-gradient(#fbe3b0, #f9c774 55%, #f7b75a);
    border-color: #d9a24c;
  }

  .corner {
    display: flex;
    align-items: center;
    justify-content: center;
    background: #dde8f6;
    border-right: 1px solid #9eb6ce;
    border-bottom: 1px solid #9eb6ce;
  }

  .rh {
    display: flex;
    align-items: center;
    justify-content: center;
    box-sizing: border-box;
    letter-spacing: -.4px;
    color: #30496e;
    background: linear-gradient(#e8f0fa, #dbe6f5);
    border-right: 1px solid #9eb6ce;
    border-bottom: 1px solid #9eb6ce;
  }

  .rh.sel {
    background: linear-gradient(#fbe3b0, #f8c36c);
    border-color: #d9a24c;
  }

  .c {
    position: relative;
    box-sizing: border-box;
    padding-left: 3px;
    line-height: 19px;
    color: #111;
    white-space: nowrap;
    border-right: 1px solid #d0d7e5;
    border-bottom: 1px solid #d0d7e5;
  }

  .c.num,
  .c.hd {
    padding-left: 0;
    text-align: center;
  }

  .c.num {
    letter-spacing: -.6px;
  }

  .c.hd {
    font-weight: 700;
  }

  .c.active {
    outline: 2px solid #000;
    outline-offset: -1px;
    z-index: 1;
  }

  .c.active::after {
    content: '';
    position: absolute;
    right: -3px;
    bottom: -3px;
    width: 6px;
    height: 6px;
    background: #000;
  }

  .vscroll {
    flex: 1;
    display: flex;
    flex-direction: column;
    background: linear-gradient(90deg, #8aa8d6, #7094c8);
    border-left: 1px solid #5a7aa6;
    box-sizing: border-box;
  }

  .vsplit {
    height: 7px;
    margin: 1px 2px 0;
    background: linear-gradient(#f2f6fb, #cfdcec);
    border: 1px solid #7f97b6;
    box-sizing: border-box;
  }

  .varrow {
    height: 18px;
    flex: none;
    display: flex;
    align-items: center;
    justify-content: center;
  }

  .up {
    border: 5px solid transparent;
    border-bottom: 5px solid #3e5f8c;
    border-top: none;
  }

  .down {
    border: 5px solid transparent;
    border-top: 5px solid #3e5f8c;
    border-bottom: none;
  }

  .vthumb {
    height: 450px;
    flex: none;
    box-sizing: border-box;
    display: flex;
    align-items: center;
    justify-content: center;
    background: linear-gradient(90deg, #eef3fa, #c3d3e7);
    border: 1px solid #5f7ba3;
    border-radius: 2px;
  }

  .vthumb span {
    width: 8px;
    height: 7px;
    background: repeating-linear-gradient(#7a8ea8 0 1px, transparent 1px 2px);
  }

  .vtrack {
    flex: 1;
  }

  /* sheet tabs */
  .sheetbar {
    height: 16px;
    display: flex;
    background: linear-gradient(#a4bcdd, #7fa0cf);
    border-top: 1px solid #4f6f98;
    box-sizing: content-box;
    margin-top: -1px;
  }

  .navs {
    width: 59px;
    flex: none;
    display: flex;
    align-items: center;
    padding-left: 3px;
    box-sizing: border-box;
    background: #dce8f7;
  }

  .stabs {
    display: flex;
    flex: none;
    background: linear-gradient(#dce8f7, #c7d9ef) 0 0 / calc(100% - 41px) 100% no-repeat;
  }

  .stab {
    position: relative;
    width: 58px;
    display: flex;
    align-items: center;
    justify-content: center;
    font-size: 11.500px;
    letter-spacing: 0;
    line-height: 15px;
    color: #3b649f;
  }

  .stab svg {
    position: absolute;
    left: 0;
    top: 0;
  }

  .stab span {
    position: relative;
  }

  .stab.first {
    width: 62px;
    padding-left: 6px;
    box-sizing: border-box;
    font-size: 12.500px;
    font-weight: 700;
    color: #15428b;
  }

  .stab.newt {
    width: 41px;
  }

  .htrack-l {
    flex: 1;
  }

  .hsplit {
    width: 6px;
    margin: 1px 0;
    background: #eef3fa;
    border: 1px solid #7f97b6;
    box-sizing: border-box;
    flex: none;
  }

  .harrow {
    width: 18px;
    display: flex;
    align-items: center;
    justify-content: center;
    flex: none;
  }

  .left {
    border: 5px solid transparent;
    border-right: 5px solid #3e5f8c;
    border-left: none;
  }

  .right {
    border: 5px solid transparent;
    border-left: 5px solid #3e5f8c;
    border-right: none;
  }

  .hthumb {
    width: 442px;
    flex: none;
    display: flex;
    align-items: center;
    justify-content: center;
    box-sizing: border-box;
    background: linear-gradient(#eef3fa, #c0d0e5);
    border: 1px solid #5f7ba3;
    border-radius: 2px;
  }

  .hthumb span {
    width: 7px;
    height: 8px;
    background: repeating-linear-gradient(90deg, #7a8ea8 0 1px, transparent 1px 2px);
  }

  .htrack {
    width: 46px;
    flex: none;
  }

  .hsplit2 {
    width: 6px;
    margin: 1px 17px 1px 0;
    background: #eef3fa;
    border: 1px solid #7f97b6;
    box-sizing: border-box;
    flex: none;
  }

  /* status */
  .status {
    height: 21px;
    display: flex;
    font-size: 10.5px;
    background: linear-gradient(#d7e6fa, #bcd4f3 45%, #b0ccf0 55%, #cfe2fa);
  }

  .ready {
    width: 42px;
    box-sizing: border-box;
    padding-left: 7px;
    line-height: 21px;
    border-right: 1px solid #9db6d6;
  }

  .sfill {
    flex: 1;
  }

  .sright {
    width: 245px;
    box-sizing: border-box;
    display: flex;
    align-items: center;
    padding-right: 5px;
    background: linear-gradient(#7e9dc8, #6487b9);
    border-left: 1px solid #526f96;
  }

  .views {
    margin-left: 5px;
    display: flex;
    height: 19px;
    width: 55px;
    flex: none;
    border-radius: 2px;
    overflow: hidden;
    background: #a9c2e3;
    border: 1px solid #b7cbe6;
    box-sizing: border-box;
  }

  .vb {
    flex: 1;
    display: flex;
    align-items: center;
    justify-content: center;
  }

  .vb.on {
    background: linear-gradient(#fde9b8, #fbc56b);
  }

  .zoomv {
    width: 36px;
    flex: none;
    margin-left: 9px;
    font-size: 12px;
    letter-spacing: 0;
    color: #12306b;
  }

  .zbtn {
    position: relative;
    width: 16px;
    height: 16px;
    flex: none;
    display: flex;
    align-items: center;
    justify-content: center;
    box-sizing: border-box;
    border-radius: 50%;
    background: linear-gradient(#f1f5fb, #a9bfdc);
    border: 1px solid #45648f;
  }

  .zbtn span {
    width: 9px;
    height: 2px;
    background: #4a5a72;
  }

  .zbtn.plus span::after {
    content: '';
    position: absolute;
    left: 6px;
    top: 3px;
    width: 2px;
    height: 8px;
    background: #4a5a72;
  }

  .zslider {
    flex: 1;
    height: 14px;
    display: flex;
    align-items: center;
    justify-content: center;
    background: linear-gradient(#dbe6f5, #dbe6f5) center / 100% 1px no-repeat;
  }

  .foot {
    flex: 1;
    background: #fff;
    border-top: 1px solid #3a4a5e;
  }
</style>
